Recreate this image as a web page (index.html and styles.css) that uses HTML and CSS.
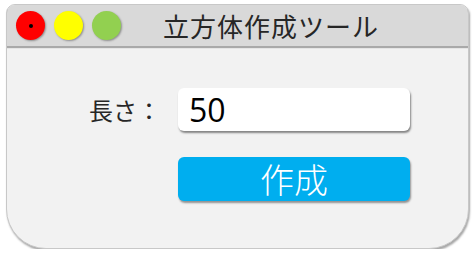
FILE: index.html
```html
<!DOCTYPE html>
<html lang="ja">
<head>
<meta charset="utf-8">
<link rel="stylesheet" href="styles.css">
</head>
<body>
<div class="window">
  <div class="titlebar">
    <div class="lights">
      <span class="light red"><span class="dot"></span></span>
      <span class="light yellow"></span>
      <span class="light green"></span>
    </div>
    <div class="title">立方体作成ツール</div>
  </div>
  <div class="content">
    <label class="label" for="len">長さ：</label>
    <div class="input" id="len">50</div>
    <div class="button">作成</div>
  </div>
</div>
</body>
</html>
```
FILE: styles.css
```css
html, body {
  margin: 0;
  padding: 0;
  background: #ffffff;
}
body {
  padding: 4px 0 0 6px;
  font-family: "Noto Sans CJK JP", "Noto Sans", sans-serif;
}
.window {
  box-sizing: border-box;
  width: 463px;
  height: 245px;
  background: #f2f2f2;
  border: 1px solid #c8c8c8;
  border-radius: 9px 9px 40px 40px;
  box-shadow: 1px 2px 2px rgba(0,0,0,0.35);
  overflow: hidden;
}
.titlebar {
  height: 41px;
  background: #d9d9d9;
  display: flex;
  align-items: center;
  box-shadow: 0 2px 1px rgba(0,0,0,0.3);
  position: relative;
}
.lights {
  display: flex;
  gap: 9px;
  padding-left: 9px;
}
.light {
  width: 29px;
  height: 29px;
  border-radius: 50%;
  display: flex;
  align-items: center;
  justify-content: center;
  box-shadow: 1px 1px 2px rgba(0,0,0,0.35);
}
.red { background: #ff0000; }
.yellow { background: #ffff00; }
.green { background: #92d050; }
.dot {
  width: 4px;
  height: 4px;
  border-radius: 50%;
  background: #000;
}
.title {
  margin-left: 42px;
  font-size: 26px;
  color: #262626;
  letter-spacing: 1px;
  line-height: 1;
}
.content {
  display: grid;
  grid-template-columns: 171px 232px;
  grid-template-rows: 43px 44px;
  row-gap: 26px;
  padding-top: 42px;
  align-items: center;
}
.label {
  justify-self: end;
  padding-right: 17px;
  font-size: 24px;
  color: #262626;
}
.input {
  box-sizing: border-box;
  height: 43px;
  background: #ffffff;
  border-radius: 6px;
  box-shadow: 1px 2px 2px rgba(0,0,0,0.45);
  font-family: "Open Sans", "Noto Sans", sans-serif;
  font-size: 32px;
  font-weight: 500;
  color: #000;
  padding-left: 11px;
  display: flex;
  align-items: center;
}
.button {
  grid-column: 2;
  height: 44px;
  background: #00aeef;
  border-radius: 6px;
  box-shadow: 1px 2px 2px rgba(0,0,0,0.4);
  color: #ffffff;
  font-size: 34px;
  font-weight: 300;
  display: flex;
  align-items: center;
  justify-content: center;
  line-height: 1;
}
```
